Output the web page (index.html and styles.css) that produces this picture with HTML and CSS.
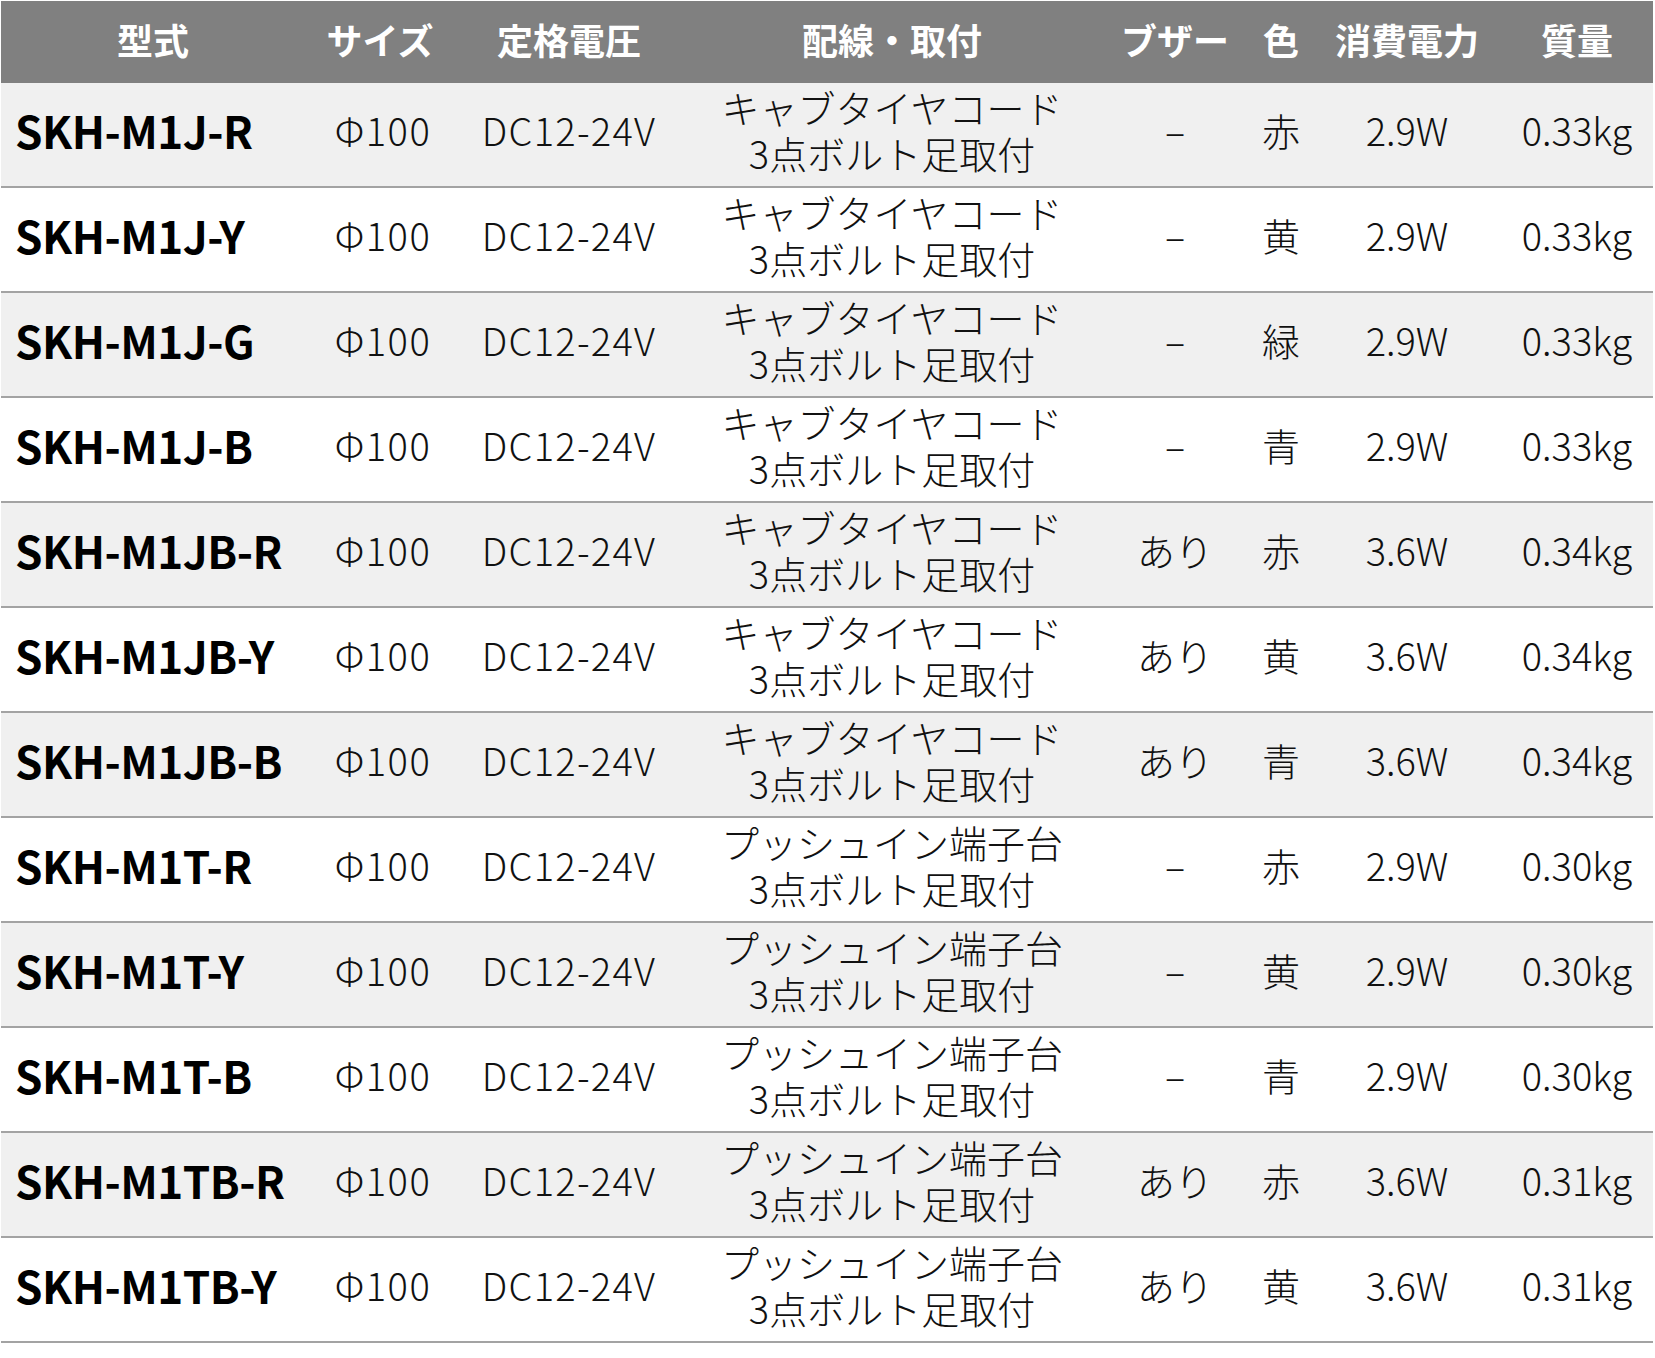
FILE: index.html
```html
<!DOCTYPE html>
<html lang="ja">
<head>
<meta charset="utf-8">
<title>仕様表</title>
<link rel="stylesheet" href="styles.css">
</head>
<body>
<table class="spec">
  <colgroup>
    <col class="c-model"><col class="c-size"><col class="c-volt"><col class="c-wire"><col class="c-buzz"><col class="c-color"><col class="c-power"><col class="c-mass">
  </colgroup>
  <thead>
    <tr class="head">
      <th>型式</th><th>サイズ</th><th>定格電圧</th><th>配線・取付</th><th>ブザー</th><th>色</th><th>消費電力</th><th>質量</th>
    </tr>
  </thead>
  <tbody>
    <tr class="odd"><td class="model">SKH-M1J-R</td><td class="size">Φ100</td><td class="volt">DC12-24V</td><td class="wire"><span class="ln">キャブタイヤコード</span><span class="ln">3点ボルト足取付</span></td><td>–</td><td>赤</td><td>2.9W</td><td>0.33kg</td></tr>
    <tr class="even"><td class="model">SKH-M1J-Y</td><td class="size">Φ100</td><td class="volt">DC12-24V</td><td class="wire"><span class="ln">キャブタイヤコード</span><span class="ln">3点ボルト足取付</span></td><td>–</td><td>黄</td><td>2.9W</td><td>0.33kg</td></tr>
    <tr class="odd"><td class="model">SKH-M1J-G</td><td class="size">Φ100</td><td class="volt">DC12-24V</td><td class="wire"><span class="ln">キャブタイヤコード</span><span class="ln">3点ボルト足取付</span></td><td>–</td><td>緑</td><td>2.9W</td><td>0.33kg</td></tr>
    <tr class="even"><td class="model">SKH-M1J-B</td><td class="size">Φ100</td><td class="volt">DC12-24V</td><td class="wire"><span class="ln">キャブタイヤコード</span><span class="ln">3点ボルト足取付</span></td><td>–</td><td>青</td><td>2.9W</td><td>0.33kg</td></tr>
    <tr class="odd"><td class="model">SKH-M1JB-R</td><td class="size">Φ100</td><td class="volt">DC12-24V</td><td class="wire"><span class="ln">キャブタイヤコード</span><span class="ln">3点ボルト足取付</span></td><td>あり</td><td>赤</td><td>3.6W</td><td>0.34kg</td></tr>
    <tr class="even"><td class="model">SKH-M1JB-Y</td><td class="size">Φ100</td><td class="volt">DC12-24V</td><td class="wire"><span class="ln">キャブタイヤコード</span><span class="ln">3点ボルト足取付</span></td><td>あり</td><td>黄</td><td>3.6W</td><td>0.34kg</td></tr>
    <tr class="odd"><td class="model">SKH-M1JB-B</td><td class="size">Φ100</td><td class="volt">DC12-24V</td><td class="wire"><span class="ln">キャブタイヤコード</span><span class="ln">3点ボルト足取付</span></td><td>あり</td><td>青</td><td>3.6W</td><td>0.34kg</td></tr>
    <tr class="even"><td class="model">SKH-M1T-R</td><td class="size">Φ100</td><td class="volt">DC12-24V</td><td class="wire"><span class="ln">プッシュイン端子台</span><span class="ln">3点ボルト足取付</span></td><td>–</td><td>赤</td><td>2.9W</td><td>0.30kg</td></tr>
    <tr class="odd"><td class="model">SKH-M1T-Y</td><td class="size">Φ100</td><td class="volt">DC12-24V</td><td class="wire"><span class="ln">プッシュイン端子台</span><span class="ln">3点ボルト足取付</span></td><td>–</td><td>黄</td><td>2.9W</td><td>0.30kg</td></tr>
    <tr class="even"><td class="model">SKH-M1T-B</td><td class="size">Φ100</td><td class="volt">DC12-24V</td><td class="wire"><span class="ln">プッシュイン端子台</span><span class="ln">3点ボルト足取付</span></td><td>–</td><td>青</td><td>2.9W</td><td>0.30kg</td></tr>
    <tr class="odd"><td class="model">SKH-M1TB-R</td><td class="size">Φ100</td><td class="volt">DC12-24V</td><td class="wire"><span class="ln">プッシュイン端子台</span><span class="ln">3点ボルト足取付</span></td><td>あり</td><td>赤</td><td>3.6W</td><td>0.31kg</td></tr>
    <tr class="even"><td class="model">SKH-M1TB-Y</td><td class="size">Φ100</td><td class="volt">DC12-24V</td><td class="wire"><span class="ln">プッシュイン端子台</span><span class="ln">3点ボルト足取付</span></td><td>あり</td><td>黄</td><td>3.6W</td><td>0.31kg</td></tr>
  </tbody>
</table>
</body>
</html>
```

FILE: styles.css
```css
html, body {
  margin: 0;
  padding: 0;
  background: #ffffff;
}

body {
  padding: 1px 0 0 1px;
  font-family: "Noto Sans CJK JP", "Noto Sans", sans-serif;
  color: #111111;
}

.spec {
  border-collapse: separate;
  border-spacing: 0;
  table-layout: fixed;
  width: 1652px;
}

.c-model { width: 304px; }
.c-size { width: 150px; }
.c-volt { width: 228px; }
.c-wire { width: 418px; }
.c-buzz { width: 148px; }
.c-color { width: 64px; }
.c-power { width: 188px; }
.c-mass { width: 152px; }

.head {
  height: 82px;
  background: #808080;
}

.head th {
  padding: 0 0 7px 0;
  color: #ffffff;
  font-size: 36px;
  font-weight: 700;
  text-align: center;
  vertical-align: middle;
  white-space: nowrap;
}

tbody tr {
  height: 105px;
}

tbody td {
  padding: 0 0 9px 0;
  border-bottom: 2px solid #a3a3a3;
  text-align: center;
  vertical-align: middle;
  font-family: "Noto Sans CJK JP Light", "Noto Sans CJK JP", sans-serif;
  font-size: 38px;
  font-weight: 300;
  line-height: 46px;
  white-space: nowrap;
}

.odd { background: #f0f0f0; }
.even { background: #ffffff; }

tbody td.model {
  text-align: left;
  padding-left: 14px;
  font-family: "Noto Sans CJK JP", sans-serif;
  font-size: 44px;
  font-weight: 700;
  letter-spacing: -0.5px;
  color: #000000;
}

tbody td.size {
  letter-spacing: 1.5px;
  padding-left: 6px;
}

tbody td.volt {
  letter-spacing: 1.3px;
}

.ln {
  display: block;
  height: 46px;
  line-height: 46px;
}
```
